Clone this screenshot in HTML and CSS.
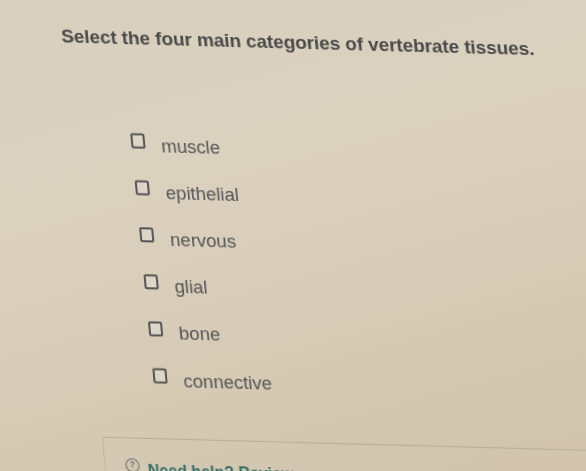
FILE: index.html
```html
<!DOCTYPE html>
<html lang="en">
<head>
<meta charset="utf-8">
<title>Vertebrate tissues</title>
<link rel="stylesheet" href="styles.css">
</head>
<body>
<main class="sheet">
  <h1 class="prompt">Select the four main categories of vertebrate tissues.</h1>
  <ul class="options">
    <li class="option"><span class="box"></span><span class="label">muscle</span></li>
    <li class="option"><span class="box"></span><span class="label">epithelial</span></li>
    <li class="option"><span class="box"></span><span class="label">nervous</span></li>
    <li class="option"><span class="box"></span><span class="label">glial</span></li>
    <li class="option"><span class="box"></span><span class="label">bone</span></li>
    <li class="option"><span class="box"></span><span class="label">connective</span></li>
  </ul>
  <section class="help">
    <span class="help-icon">?</span>
    <span class="help-text">Need help? Review</span>
  </section>
</main>
</body>
</html>
```
FILE: styles.css
```css
html, body {
  margin: 0;
  padding: 0;
  width: 586px;
  height: 471px;
  overflow: hidden;
}
body {
  background: linear-gradient(165deg, #d8cfbe 0%, #dbd1bf 35%, #d6cab5 70%, #d1c3ac 100%);
  font-family: "Liberation Sans", Arial, sans-serif;
}
.sheet {
  box-sizing: border-box;
  width: 700px;
  padding: 23px 0 0 58px;
  transform-origin: 0 0;
  transform: matrix(1, 0.027, 0.094, 1, 0, 0);
  filter: blur(0.5px);
}
.prompt {
  margin: 0;
  font-size: 19px;
  line-height: 24px;
  font-weight: bold;
  letter-spacing: -0.1px;
  color: #4a4a4a;
  white-space: nowrap;
}
.options {
  list-style: none;
  margin: 83px 0 0 60px;
  padding: 0;
  display: flex;
  flex-direction: column;
  gap: 25px;
}
.option {
  display: flex;
  align-items: flex-start;
  height: 22px;
}
.box {
  box-sizing: border-box;
  width: 14px;
  height: 15px;
  border: 2px solid #545454;
  border-radius: 2px;
  background: #ddd5c6;
  flex: none;
}
.label {
  margin-left: 16px;
  font-size: 18.5px;
  line-height: 23px;
  color: #555555;
  letter-spacing: 0;
}
.help {
  margin: 48px 0 0 3px;
  border-top: 1px solid #b9ac96;
  border-left: 1px solid #c2b5a0;
  padding: 20px 0 0 20px;
  display: flex;
  align-items: flex-start;
  gap: 8px;
  height: 60px;
}
.help-icon {
  box-sizing: border-box;
  width: 14px;
  height: 14px;
  border: 1.5px solid #6d6d6d;
  border-radius: 50%;
  font-size: 9px;
  line-height: 11px;
  text-align: center;
  color: #6d6d6d;
  font-weight: bold;
  flex: none;
}
.help-text {
  margin-top: 3px;
  font-size: 16px;
  line-height: 18px;
  font-weight: bold;
  color: #336f66;
  white-space: nowrap;
}
```
